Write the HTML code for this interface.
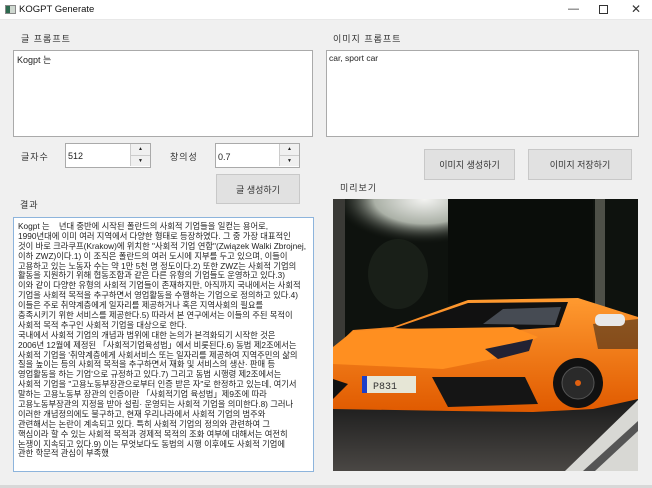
<!DOCTYPE html>
<html><head><meta charset="utf-8"><style>
*{margin:0;padding:0;box-sizing:border-box}
body{width:652px;height:488px;background:#f0f0f0;font-family:"Liberation Sans","Noto Sans CJK KR",sans-serif;font-size:9px;color:#222;position:relative;overflow:hidden}
.a{position:absolute}
.title{left:0;top:0;width:652px;height:19px;background:#fff}
.box{background:#fff;border:1px solid #aaa}
.btn{background:#e1e1e1;border:1px solid #c8c8c8;display:flex;align-items:center;justify-content:center;font-size:9px;color:#333}
.lbl{font-size:9px;color:#333;letter-spacing:1px}
.spin{background:#fff;border:1px solid #aaa}
.arr{position:absolute;right:0;width:20px;height:11px;border-left:1px solid #ccc;background:#f0f0f0;font-size:5px;text-align:center;line-height:11px}
#res div{white-space:nowrap;height:9.9px;line-height:9.9px;font-size:8.3px;color:#222}
</style></head><body>
<div class="a title"></div>
<div class="a" style="left:5px;top:5px;width:11px;height:9px;border:1px solid #888;background:#cfd8d0"><div style="width:4px;height:7px;background:#2d6a4f"></div></div>
<div class="a" style="left:19px;top:4px;font-size:9.5px;color:#111">KOGPT Generate</div>
<div class="a" style="left:568px;top:3px;font-size:11px;color:#333">—</div>
<div class="a" style="left:599px;top:5px;width:9px;height:9px;border:1px solid #333"></div>
<div class="a" style="left:631px;top:2px;font-size:12px;color:#333">✕</div>
<div class="a" style="left:0;top:19px;width:652px;height:1px;background:#e8e8e8"></div>

<div class="a lbl" style="left:21px;top:32px">글 프롬프트</div>
<div class="a box" style="left:13px;top:50px;width:300px;height:87px;padding:2px 3px;font-size:9px">Kogpt 는</div>
<div class="a lbl" style="left:333px;top:32px">이미지 프롬프트</div>
<div class="a box" style="left:326px;top:50px;width:313px;height:87px;padding:2px 2px;font-size:8.5px">car, sport car</div>

<div class="a lbl" style="left:21px;top:150px">글자수</div>
<div class="a spin" style="left:65px;top:143px;width:86px;height:25px"><div style="position:absolute;left:2px;top:7px">512</div><div class="arr" style="top:0">▲</div><div class="arr" style="top:11px;border-top:1px solid #ccc">▼</div></div>
<div class="a lbl" style="left:170px;top:150px">창의성</div>
<div class="a spin" style="left:215px;top:143px;width:85px;height:25px"><div style="position:absolute;left:2px;top:8px">0.7</div><div class="arr" style="top:0">▲</div><div class="arr" style="top:11px;border-top:1px solid #ccc">▼</div></div>
<div class="a btn" style="left:216px;top:174px;width:84px;height:30px">글 생성하기</div>
<div class="a lbl" style="left:20px;top:198px">결과</div>

<div class="a btn" style="left:424px;top:149px;width:91px;height:31px">이미지 생성하기</div>
<div class="a btn" style="left:528px;top:149px;width:104px;height:31px">이미지 저장하기</div>
<div class="a lbl" style="left:340px;top:181px">미리보기</div>

<div class="a box" id="res" style="left:13px;top:217px;width:301px;height:255px;border-color:#8db4dc;padding:4px 4px">
<div>Kogpt 는&nbsp;&nbsp;&nbsp; 년대 중반에 시작된 폴란드의 사회적 기업들을 일컫는 용어로,</div>
<div>1990년대에 이미 여러 지역에서 다양한 형태로 등장하였다. 그 중 가장 대표적인</div>
<div>것이 바로 크라쿠프(Krakow)에 위치한 "사회적 기업 연합"(Związek Walki Zbrojnej,</div>
<div>이하 ZWZ)이다.1) 이 조직은 폴란드의 여러 도시에 지부를 두고 있으며, 이들이</div>
<div>고용하고 있는 노동자 수는 약 1만 5천 명 정도이다.2) 또한 ZWZ는 사회적 기업의</div>
<div>활동을 지원하기 위해 협동조합과 같은 다른 유형의 기업들도 운영하고 있다.3)</div>
<div>이와 같이 다양한 유형의 사회적 기업들이 존재하지만, 아직까지 국내에서는 사회적</div>
<div>기업을 사회적 목적을 추구하면서 영업활동을 수행하는 기업으로 정의하고 있다.4)</div>
<div>이들은 주로 취약계층에게 일자리를 제공하거나 혹은 지역사회의 필요를</div>
<div>충족시키기 위한 서비스를 제공한다.5) 따라서 본 연구에서는 이들의 주된 목적이</div>
<div>사회적 목적 추구인 사회적 기업을 대상으로 한다.</div>
<div>국내에서 사회적 기업의 개념과 범위에 대한 논의가 본격화되기 시작한 것은</div>
<div>2006년 12월에 제정된 「사회적기업육성법」에서 비롯된다.6) 동법 제2조에서는</div>
<div>사회적 기업을 '취약계층에게 사회서비스 또는 일자리를 제공하여 지역주민의 삶의</div>
<div>질을 높이는 등의 사회적 목적을 추구하면서 재화 및 서비스의 생산· 판매 등</div>
<div>영업활동을 하는 기업'으로 규정하고 있다.7) 그리고 동법 시행령 제2조에서는</div>
<div>사회적 기업을 "고용노동부장관으로부터 인증 받은 자"로 한정하고 있는데, 여기서</div>
<div>말하는 고용노동부 장관의 인증이란 「사회적기업 육성법」제9조에 따라</div>
<div>고용노동부장관의 지정을 받아 설립· 운영되는 사회적 기업을 의미한다.8) 그러나</div>
<div>이러한 개념정의에도 불구하고, 현재 우리나라에서 사회적 기업의 범주와</div>
<div>관련해서는 논란이 계속되고 있다. 특히 사회적 기업의 정의와 관련하여 그</div>
<div>핵심이라 할 수 있는 사회적 목적과 경제적 목적의 조화 여부에 대해서는 여전히</div>
<div>논쟁이 지속되고 있다.9) 이는 무엇보다도 동법의 시행 이후에도 사회적 기업에</div>
<div>관한 학문적 관심이 부족했</div>
</div>

<svg class="a" style="left:333px;top:199px" width="305" height="272" viewBox="0 0 305 272">
<defs>
<radialGradient id="sky" cx="0.3" cy="0.0" r="0.3"><stop offset="0" stop-color="#f4f4f2"/><stop offset="0.55" stop-color="#aab0a6"/><stop offset="1" stop-color="#121610" stop-opacity="0"/></radialGradient>
<linearGradient id="road" x1="0" y1="0" x2="0" y2="1"><stop offset="0" stop-color="#1a1a1a"/><stop offset="1" stop-color="#4a4744"/></linearGradient>
<linearGradient id="body" x1="0" y1="0" x2="0" y2="1"><stop offset="0" stop-color="#ff9a30"/><stop offset="1" stop-color="#e05a00"/></linearGradient>
</defs>
<rect width="305" height="272" fill="#0e120e"/>
<rect width="305" height="150" fill="url(#sky)"/>
<ellipse cx="65" cy="75" rx="30" ry="35" fill="#1e251c" opacity="0.7"/>
<rect x="0" y="0" width="12" height="150" fill="#3a3a36"/>
<rect x="262" y="0" width="10" height="120" fill="#7a7a70" opacity="0.6"/>
<rect x="115" y="0" width="145" height="105" fill="#0a0d0a"/>
<rect x="0" y="200" width="305" height="72" fill="url(#road)"/>
<polygon points="232,272 305,201 305,272" fill="#d8d8d4"/>
<polygon points="250,272 305,222 305,232 262,272" fill="#555"/>
<polygon points="0,150 20,131 60,128 135,101 245,99 305,118 305,200 260,210 200,213 120,212 0,210" fill="url(#body)"/>
<polygon points="62,129 135,104 235,103 226,128 140,134" fill="#111"/>
<polygon points="150,125 170,110 228,108 222,126" fill="#6a7380" opacity="0.6"/>
<polygon points="0,148 20,132 60,130 180,128 205,138 170,158 110,170 0,165" fill="#ff8f20"/>
<polygon points="99,178 192,178 205,205 115,208" fill="#151515"/>
<polygon points="152,150 200,140 196,152 165,160" fill="#223"/>
<polygon points="0,180 15,185 0,200" fill="#111"/>
<rect x="29" y="177" width="54" height="17" fill="#e6e6d6"/>
<rect x="29" y="177" width="5" height="17" fill="#1d3fc8"/>
<text x="40" y="190" font-size="10" font-family="Liberation Mono,monospace" fill="#333">P831</text>
<circle cx="245" cy="184" r="25" fill="#111"/>
<circle cx="245" cy="184" r="16" fill="#2a2a2a" stroke="#555" stroke-width="1"/>
<circle cx="245" cy="184" r="3" fill="#e06010"/>
<polygon points="260,125 305,120 305,150 265,150" fill="#1a1a1a" opacity="0.5"/>
<rect x="262" y="115" width="30" height="12" rx="5" fill="#e8e8e8"/>
</svg>
<div class="a" style="left:0;top:485px;width:652px;height:3px;background:#d8d8d8"></div>
</body></html>
